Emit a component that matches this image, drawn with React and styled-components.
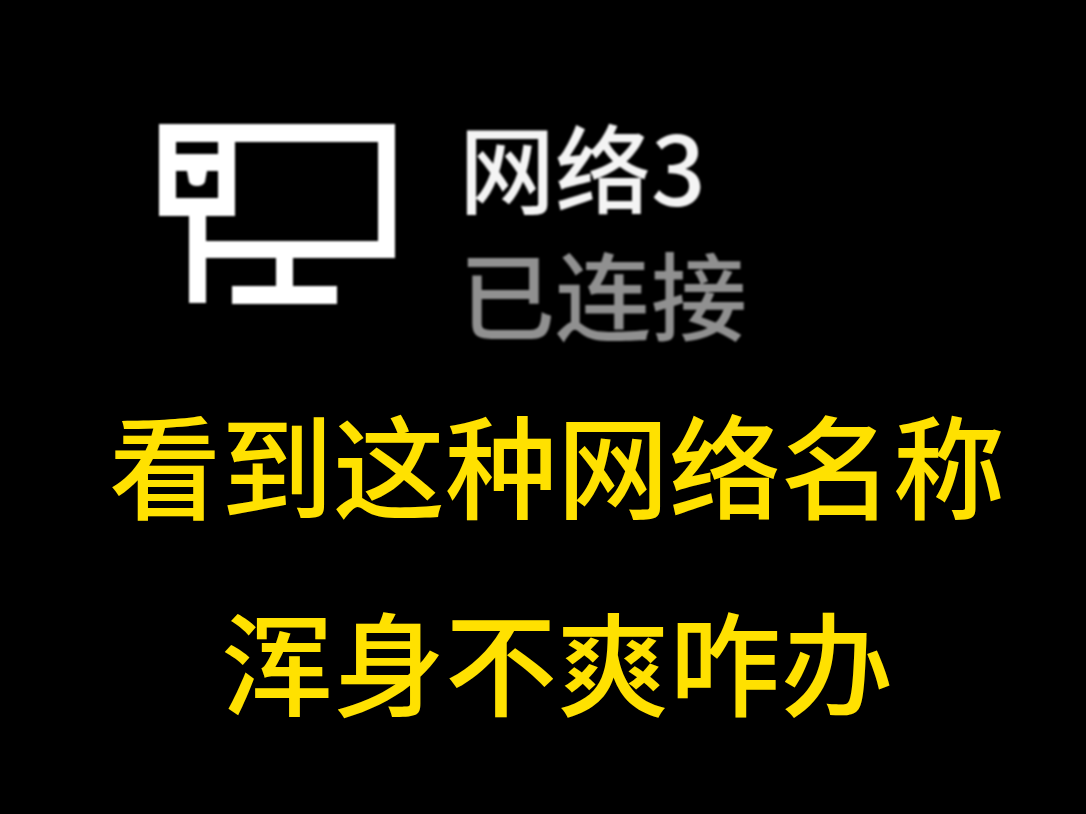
import React from "react";
import styled, { createGlobalStyle } from "styled-components";

function NetworkIcon() {
  return (
    <Icon viewBox="0 0 236 180" aria-hidden="true">
      <path
        fillRule="evenodd"
        d="M0 0H236V134H134V162H178V180H73V162H117V134H47V179H30V92H0Z
           M76 18V92H47V117H219V18Z
           M17 18H59V30H17Z
           M17 47H28L30 58Q32 62 38 62Q44 62 46 58L48 47H59V74H17Z"
      />
    </Icon>
  );
}

function App() {
  return (
    <Page>
      <GlobalStyle />
      <Network>
        <NetworkIcon />
        <div>
          <Name>网络3</Name>
          <Status>已连接</Status>
        </div>
      </Network>
      <Caption>
        <Line>看到这种网络名称</Line>
        <Line>浑身不爽咋办</Line>
      </Caption>
    </Page>
  );
}

export default App;

const GlobalStyle = createGlobalStyle`
  body {
    margin: 0;
    background-color: #000;
  }
`;

const Page = styled.main`
  min-height: 100vh;
  box-sizing: border-box;
  padding-top: 102px;
  background-color: #000;
  font-family: "Noto Sans CJK SC", sans-serif;
`;

const Network = styled.section`
  display: flex;
  align-items: flex-start;
  gap: 64px;
  padding-left: 159px;
  filter: blur(1px);
`;

const Icon = styled.svg`
  flex: none;
  width: 236px;
  height: 180px;
  margin-top: 22px;
  fill: #fff;
`;

const Name = styled.h2`
  margin: 0;
  font-size: 96px;
  font-weight: 500;
  line-height: 126px;
  color: #f4f4f4;
  white-space: nowrap;
`;

const Status = styled.p`
  margin: 0;
  font-size: 96px;
  font-weight: 500;
  line-height: 128px;
  color: #909090;
  white-space: nowrap;
`;

const Caption = styled.h1`
  margin: 8px 0 0;
  padding-left: 28px;
  font-size: 112px;
  font-weight: 500;
  color: #ffe100;
  text-align: center;
`;

const Line = styled.span`
  display: block;
  line-height: 197px;
  white-space: nowrap;
`;
